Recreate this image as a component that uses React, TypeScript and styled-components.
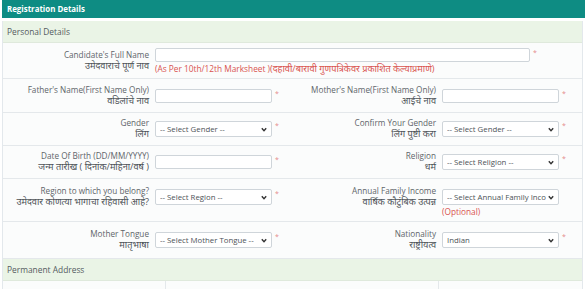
import React from 'react'
import styled, { createGlobalStyle } from 'styled-components'

const GlobalStyle = createGlobalStyle`
  html, body {
    margin: 0;
    padding: 0;
    background: #ffffff;
  }
  body {
    font-family: 'Open Sans', 'Noto Sans', 'Noto Sans Devanagari', sans-serif;
    color: #555b61;
  }
`

const Panel = styled.div`
  margin-left: 2px;
  width: 581px;
`

const TitleBar = styled.div`
  height: 18px;
  background: #0e8c83;
  color: #ffffff;
  font-size: 7.9px;
  font-weight: 700;
  display: flex;
  align-items: center;
  padding-left: 5px;
  margin-right: -2px;
`

const Body = styled.div`
  border-left: 1px solid #e3e8ec;
  border-right: 1px solid #e3e8ec;
`

const SectionHead = styled.div<{ top?: number }>`
  margin-top: ${({ top }) => top ?? 0}px;
  height: 22px;
  box-sizing: border-box;
  background: #eaf4e6;
  border-bottom: 1px solid #dfe9dc;
  display: flex;
  align-items: center;
  padding-left: 4px;
  font-size: 8.4px;
  color: #555b61;
`

const Row = styled.div<{ h: number; $start?: boolean; $pad?: number }>`
  display: grid;
  grid-template-columns: 152px 137px 150px 1fr;
  align-items: ${({ $start }) => ($start ? 'start' : 'center')};
  align-content: ${({ $start }) => ($start ? 'start' : 'stretch')};
  height: ${({ h }) => h}px;
  box-sizing: border-box;
  padding-top: ${({ $pad }) => $pad ?? 0}px;
  border-bottom: 1px solid #e4e8eb;
  background: #fbfcfc;
`

const Label = styled.div`
  text-align: right;
  padding-right: 6px;
  display: flex;
  flex-direction: column;
  font-size: 8.2px;
  line-height: 10px;
  color: #60656a;
  white-space: nowrap;
`

const Deva = styled.span`
  font-size: 9.2px;
  line-height: 12px;
  color: #4e5358;
`

const Field = styled.div<{ $span?: boolean; $shift?: number }>`
  grid-column: ${({ $span }) => ($span ? '2 / 5' : 'auto')};
  display: flex;
  flex-direction: column;
  padding-top: ${({ $shift }) => $shift ?? 0}px;
`

const Line = styled.div`
  display: flex;
  align-items: flex-start;
`

const Input = styled.input<{ w: number }>`
  width: ${({ w }) => w}px;
  height: 14px;
  box-sizing: border-box;
  border: 1px solid #cfd5da;
  border-radius: 2px;
  background: #ffffff;
  padding: 0 4px;
  font-family: inherit;
  font-size: 7px;
  outline: none;
`

const SelectWrap = styled.div<{ w: number }>`
  position: relative;
  width: ${({ w }) => w}px;
  height: 16px;
  flex: none;
`

const Select = styled.select`
  appearance: none;
  display: block;
  width: 100%;
  height: 16px;
  margin: 0;
  box-sizing: border-box;
  border: 1px solid #cfd5da;
  border-radius: 2px;
  background: #ffffff;
  padding: 0 12px 0 4px;
  font-family: inherit;
  font-size: 7.8px;
  line-height: 14px;
  color: #4d5358;
  outline: none;
`

const Chevron = styled.svg`
  position: absolute;
  right: 5px;
  top: 6px;
  pointer-events: none;
`

const Star = styled.span`
  color: #e58c8c;
  font-size: 7px;
  line-height: 7px;
  margin-left: 3px;
  margin-top: 1px;
`

const Hint = styled.div`
  color: #d9534f;
  font-size: 8.3px;
  line-height: 11px;
  margin-top: 1px;
  white-space: nowrap;
`

const HintDeva = styled.span`
  font-size: 9.2px;
`

const BottomRow = styled.div`
  display: grid;
  grid-template-columns: 163px 273px 1fr;
  height: 8px;
  background: #fbfcfc;
`

const Cell = styled.div`
  border-right: 1px solid #e4e8eb;
  &:last-child {
    border-right: none;
  }
`

const FormSelect = ({ w, text }: { w: number; text: string }) => (
  <SelectWrap w={w}>
    <Select defaultValue="x">
      <option value="x">{text}</option>
    </Select>
    <Chevron width="6" height="5" viewBox="0 0 6 5">
      <path d="M0.8 1.2 L3 3.6 L5.2 1.2" fill="none" stroke="#333" strokeWidth="1.4" />
    </Chevron>
  </SelectWrap>
)

const Lbl = ({ en, mr }: { en: string; mr: string }) => (
  <Label>
    <span>{en}</span>
    <Deva>{mr}</Deva>
  </Label>
)

export default function App() {
  return (
    <>
      <GlobalStyle />
      <Panel>
        <TitleBar>Registration Details</TitleBar>
        <Body>
          <SectionHead top={3}>Personal Details</SectionHead>

          <Row h={36}>
            <Lbl en="Candidate's Full Name" mr="उमेदवाराचे पूर्ण नाव" />
            <Field $span>
              <Line>
                <Input w={375} />
                <Star>*</Star>
              </Line>
              <Hint>
                (As Per 10th/12th Marksheet )
                <HintDeva>(दहावी/बारावी गुणपत्रिकेवर प्रकाशित केल्याप्रमाणे)</HintDeva>
              </Hint>
            </Field>
          </Row>

          <Row h={34}>
            <Lbl en="Father's Name(First Name Only)" mr="वडिलांचे नाव" />
            <Field>
              <Line>
                <Input w={117} />
                <Star>*</Star>
              </Line>
            </Field>
            <Lbl en="Mother's Name(First Name Only)" mr="आईचे नाव" />
            <Field>
              <Line>
                <Input w={117} />
                <Star>*</Star>
              </Line>
            </Field>
          </Row>

          <Row h={33}>
            <Lbl en="Gender" mr="लिंग" />
            <Field>
              <Line>
                <FormSelect w={117} text="-- Select Gender --" />
                <Star>*</Star>
              </Line>
            </Field>
            <Lbl en="Confirm Your Gender" mr="लिंग पुष्टी करा" />
            <Field>
              <Line>
                <FormSelect w={117} text="-- Select Gender --" />
                <Star>*</Star>
              </Line>
            </Field>
          </Row>

          <Row h={33}>
            <Lbl en="Date Of Birth (DD/MM/YYYY)" mr="जन्म तारीख ( दिनांक/महिना/वर्ष )" />
            <Field>
              <Line>
                <Input w={117} />
                <Star>*</Star>
              </Line>
            </Field>
            <Lbl en="Religion" mr="धर्म" />
            <Field>
              <Line>
                <FormSelect w={117} text="-- Select Religion --" />
                <Star>*</Star>
              </Line>
            </Field>
          </Row>

          <Row h={43} $start $pad={7}>
            <Lbl en="Region to which you belong?" mr="उमेदवार कोणत्या भागाचा रहिवासी आहे?" />
            <Field $shift={3}>
              <Line>
                <FormSelect w={117} text="-- Select Region --" />
                <Star>*</Star>
              </Line>
            </Field>
            <Lbl en="Annual Family Income" mr="वार्षिक कौटुंबिक उत्पन्न" />
            <Field $shift={3}>
              <Line>
                <FormSelect w={117} text="-- Select Annual Family Income --" />
              </Line>
              <Hint>(Optional)</Hint>
            </Field>
          </Row>

          <Row h={37}>
            <Lbl en="Mother Tongue" mr="मातृभाषा" />
            <Field>
              <Line>
                <FormSelect w={117} text="-- Select Mother Tongue --" />
                <Star>*</Star>
              </Line>
            </Field>
            <Lbl en="Nationality" mr="राष्ट्रीयत्व" />
            <Field>
              <Line>
                <FormSelect w={117} text="Indian" />
                <Star>*</Star>
              </Line>
            </Field>
          </Row>

          <SectionHead>Permanent Address</SectionHead>
          <BottomRow>
            <Cell />
            <Cell />
            <Cell />
          </BottomRow>
        </Body>
      </Panel>
    </>
  )
}
